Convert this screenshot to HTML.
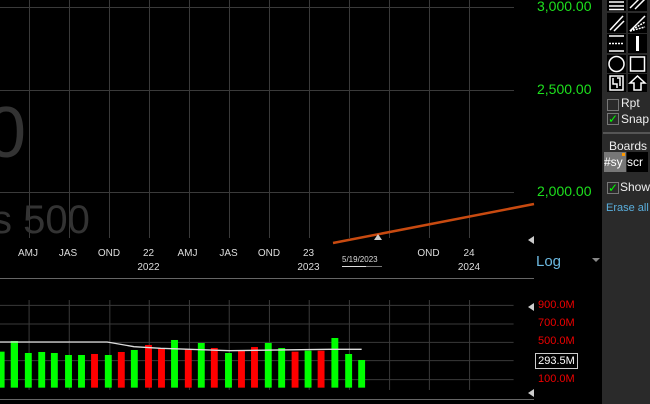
<!DOCTYPE html>
<html><head><style>
body{margin:0;width:650px;height:404px;background:#000;overflow:hidden;position:relative;font-family:"Liberation Sans",sans-serif}
.t{position:absolute;white-space:nowrap}
.c{position:absolute;white-space:nowrap;text-align:center;width:60px;margin-left:-30px;font-size:10px;color:#ddd;line-height:14px}
</style></head><body>
<svg width="650" height="404" style="position:absolute;left:0;top:0">
<g stroke="#3a3a3a" stroke-width="1">
<line x1="0" y1="7.5" x2="514" y2="7.5"/><line x1="0" y1="90.5" x2="514" y2="90.5"/><line x1="0" y1="192.5" x2="514" y2="192.5"/>
<line x1="29.5" y1="0" x2="29.5" y2="238"/><line x1="69.5" y1="0" x2="69.5" y2="238"/><line x1="109.5" y1="0" x2="109.5" y2="238"/><line x1="149.5" y1="0" x2="149.5" y2="238"/><line x1="189.5" y1="0" x2="189.5" y2="238"/><line x1="229.5" y1="0" x2="229.5" y2="238"/><line x1="269.5" y1="0" x2="269.5" y2="238"/><line x1="309.5" y1="0" x2="309.5" y2="238"/><line x1="349.5" y1="0" x2="349.5" y2="238"/><line x1="389.5" y1="0" x2="389.5" y2="238"/><line x1="429.5" y1="0" x2="429.5" y2="238"/><line x1="469.5" y1="0" x2="469.5" y2="238"/>
</g>
<line x1="333" y1="243" x2="534" y2="204" stroke="#c84a10" stroke-width="2.5"/>
<polygon points="374,240 378,234 382,240" fill="#ccc"/>
<polygon points="528,240 534,236 534,244" fill="#ccc"/>
<line x1="0" y1="278.5" x2="534" y2="278.5" stroke="#666"/>
<line x1="0" y1="399.5" x2="534" y2="399.5" stroke="#666"/>
<line x1="342" y1="266.5" x2="366" y2="266.5" stroke="#ddd"/><line x1="366" y1="266.5" x2="382" y2="266.5" stroke="#777"/>
<g transform="translate(0,230) scale(0.3827,0.3333)">
<g stroke="#3a3a3a" stroke-width="3">
<line x1="0" y1="226" x2="1342" y2="226"/><line x1="0" y1="282" x2="1342" y2="282"/><line x1="0" y1="337" x2="1342" y2="337"/><line x1="0" y1="392" x2="1342" y2="392"/><line x1="0" y1="449" x2="1342" y2="449"/>
</g>
<g stroke="#3a3a3a" stroke-width="2.6">
<line x1="76" y1="210" x2="76" y2="480"/><line x1="181" y1="210" x2="181" y2="480"/><line x1="287" y1="210" x2="287" y2="480"/><line x1="390" y1="210" x2="390" y2="480"/><line x1="495" y1="210" x2="495" y2="480"/><line x1="599" y1="210" x2="599" y2="480"/><line x1="704" y1="210" x2="704" y2="480"/><line x1="808" y1="210" x2="808" y2="480"/><line x1="913" y1="210" x2="913" y2="480"/><line x1="1018" y1="210" x2="1018" y2="480"/><line x1="1122" y1="210" x2="1122" y2="480"/><line x1="1227" y1="210" x2="1227" y2="480"/>
</g>
<g>
<rect x="0" y="365" width="12" height="108" fill="#00ff00"/>
<rect x="28" y="333" width="19" height="140" fill="#00ff00"/>
<rect x="65" y="369" width="18" height="104" fill="#00ff00"/>
<rect x="100" y="366" width="18" height="107" fill="#00ff00"/>
<rect x="133" y="369" width="18" height="104" fill="#00ff00"/>
<rect x="170" y="375" width="18" height="98" fill="#00ff00"/>
<rect x="204" y="375" width="18" height="98" fill="#00ff00"/>
<rect x="238" y="372" width="18" height="101" fill="#ff0000"/>
<rect x="274" y="375" width="18" height="98" fill="#00ff00"/>
<rect x="308" y="366" width="18" height="107" fill="#ff0000"/>
<rect x="342" y="360" width="18" height="113" fill="#00ff00"/>
<rect x="379" y="345" width="18" height="128" fill="#ff0000"/>
<rect x="413" y="355" width="18" height="118" fill="#ff0000"/>
<rect x="447" y="330" width="18" height="143" fill="#00ff00"/>
<rect x="483" y="357" width="18" height="116" fill="#ff0000"/>
<rect x="517" y="339" width="18" height="134" fill="#00ff00"/>
<rect x="551" y="354" width="18" height="119" fill="#ff0000"/>
<rect x="588" y="369" width="18" height="104" fill="#00ff00"/>
<rect x="622" y="363" width="18" height="110" fill="#ff0000"/>
<rect x="656" y="351" width="18" height="122" fill="#ff0000"/>
<rect x="692" y="339" width="18" height="134" fill="#00ff00"/>
<rect x="727" y="354" width="18" height="119" fill="#00ff00"/>
<rect x="762" y="365" width="18" height="108" fill="#ff0000"/>
<rect x="796" y="362" width="18" height="111" fill="#00ff00"/>
<rect x="830" y="362" width="18" height="111" fill="#ff0000"/>
<rect x="866" y="324" width="18" height="149" fill="#00ff00"/>
<rect x="902" y="372" width="18" height="101" fill="#00ff00"/>
<rect x="936" y="390" width="18" height="83" fill="#00ff00"/>
</g>
<polyline points="0,336 280,336 350,350 420,355 600,362 860,358 945,358" fill="none" stroke="#ddd" stroke-width="4"/>
</g>
<polygon points="528,307 534,303 534,311" fill="#ccc"/>
<polygon points="528,393 534,389 534,397" fill="#ccc"/>
<polygon points="592,258 600,258 596,262" fill="#888"/>
</svg>
<div class="t" style="left:-14px;top:92px;font-size:72px;color:#333">0</div>
<div class="t" style="left:-8px;top:198px;font-size:40px;color:#333">s 500</div>
<div class="t" style="left:537px;top:-2px;font-size:14px;color:#1ee01e">3,000.00</div>
<div class="t" style="left:537px;top:81px;font-size:14px;color:#1ee01e">2,500.00</div>
<div class="t" style="left:537px;top:183px;font-size:14px;color:#1ee01e">2,000.00</div>
<div class="c" style="left:28px;top:247px">AMJ</div>
<div class="c" style="left:68px;top:247px">JAS</div>
<div class="c" style="left:109px;top:247px">OND</div>
<div class="c" style="left:148.5px;top:247px">22<br>2022</div>
<div class="c" style="left:187.5px;top:247px">AMJ</div>
<div class="c" style="left:228.5px;top:247px">JAS</div>
<div class="c" style="left:269px;top:247px">OND</div>
<div class="c" style="left:308.5px;top:247px">23<br>2023</div>
<div class="c" style="left:428.5px;top:247px">OND</div>
<div class="c" style="left:469px;top:247px">24<br>2024</div>
<div class="t" style="left:342px;top:255px;font-size:8px;color:#ddd">5/19/2023</div>
<div class="t" style="left:536px;top:253px;font-size:15px;color:#6bb8e0">Log</div>
<div style="font-size:11px;color:#e00">
<span class="t" style="left:538px;top:299px">900.0M</span><span class="t" style="left:538px;top:317px">700.0M</span><span class="t" style="left:538px;top:335px">500.0M</span><span class="t" style="left:538px;top:373px">100.0M</span></div>
<div class="t" style="left:535px;top:353px;width:41px;height:14px;border:1px solid #ccc;color:#fff;font-size:11px;line-height:14px;text-align:center">293.5M</div>
<div style="position:absolute;left:602px;top:0;width:48px;height:404px;background:#2a2a2a"></div>
<svg width="48" height="100" style="position:absolute;left:602px;top:0" stroke="#fff" fill="none" stroke-width="1.5">
<rect x="5" y="-8" width="19" height="19" fill="#000" stroke="none"/><rect x="26" y="-8" width="19" height="19" fill="#000" stroke="none"/>
<line x1="7" y1="2" x2="22" y2="2"/><line x1="7" y1="6" x2="22" y2="6"/><line x1="7" y1="9.5" x2="22" y2="9.5"/>
<line x1="28" y1="8" x2="38" y2="-2"/><line x1="33" y1="9" x2="43" y2="-1"/>
<rect x="5" y="13" width="19" height="20" fill="#000" stroke="none"/><rect x="26" y="13" width="19" height="20" fill="#000" stroke="none"/>
<line x1="8" y1="30" x2="21" y2="16"/><line x1="12" y1="31" x2="22" y2="21"/>
<line x1="28" y1="31" x2="43" y2="16"/><line x1="28" y1="31" x2="43" y2="22" stroke-dasharray="2 1"/><line x1="28" y1="31" x2="43" y2="27" stroke-dasharray="2 1"/>
<rect x="5" y="34" width="19" height="19" fill="#000" stroke="none"/><rect x="26" y="34" width="19" height="19" fill="#000" stroke="none"/>
<line x1="7" y1="36" x2="22" y2="36"/><line x1="7" y1="43.5" x2="22" y2="43.5" stroke-dasharray="2 1"/><line x1="7" y1="51" x2="22" y2="51"/>
<line x1="35.5" y1="36" x2="35.5" y2="51" stroke-width="3"/>
<rect x="5" y="55" width="19" height="18" fill="#000" stroke="none"/><rect x="26" y="55" width="19" height="18" fill="#000" stroke="none"/>
<circle cx="14.5" cy="64" r="7.5"/><rect x="28.5" y="57" width="14" height="14"/>
<rect x="5" y="74" width="19" height="18" fill="#000" stroke="none"/><rect x="26" y="74" width="19" height="18" fill="#000" stroke="none"/>
<path d="M8 76 H21 V90 H8 Z M11 78 V84 H15 V88 M15 78 H18 V86"/>
<path d="M35.5 76 L43 83 H39 V90 H32 V83 H28 Z"/>
</svg>
<div style="position:absolute;left:607px;top:99px;width:10px;height:10px;border:1px solid #777"></div>
<div class="t" style="left:621px;top:96px;font-size:12px;color:#eee">Rpt</div>
<div style="position:absolute;left:607px;top:113px;width:10px;height:10px;border:1px solid #777;color:#0f0;font-size:12px;line-height:10px">✓</div>
<div class="t" style="left:621px;top:112px;font-size:12px;color:#eee">Snap</div>
<div style="position:absolute;left:603px;top:132px;width:47px;height:2px;background:#555"></div>
<div class="t" style="left:609px;top:139px;font-size:12px;color:#eee">Boards</div>
<div class="t" style="left:604px;top:152px;width:22px;height:20px;background:#777;color:#fff;font-size:12px;line-height:20px;overflow:hidden">#sy</div>
<div style="position:absolute;left:622px;top:153px;width:3px;height:3px;background:#f90"></div>
<div class="t" style="left:627px;top:152px;width:21px;height:20px;background:#000;color:#fff;font-size:12px;line-height:20px">scr</div>
<div style="position:absolute;left:607px;top:182px;width:10px;height:10px;border:1px solid #777;color:#0f0;font-size:12px;line-height:10px">✓</div>
<div class="t" style="left:620px;top:180px;font-size:12px;color:#eee">Show</div>
<div class="t" style="left:606px;top:202px;font-size:11px;color:#5aaedc">Erase all</div>
</body></html>
